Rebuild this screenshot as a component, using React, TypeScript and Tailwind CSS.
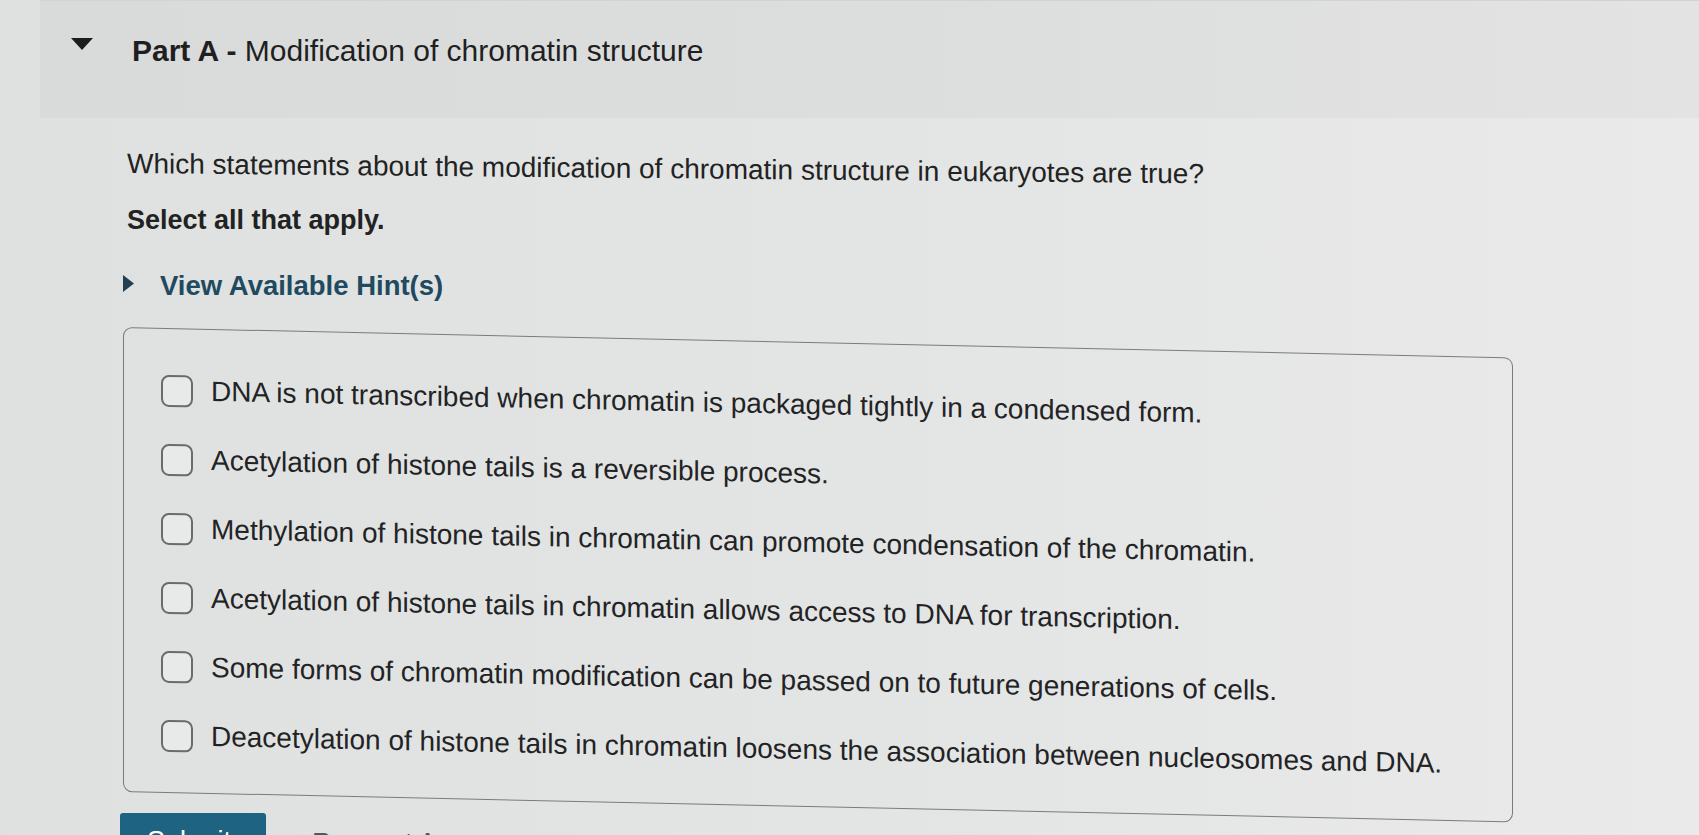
import React from "react";

const options = [
  "DNA is not transcribed when chromatin is packaged tightly in a condensed form.",
  "Acetylation of histone tails is a reversible process.",
  "Methylation of histone tails in chromatin can promote condensation of the chromatin.",
  "Acetylation of histone tails in chromatin allows access to DNA for transcription.",
  "Some forms of chromatin modification can be passed on to future generations of cells.",
  "Deacetylation of histone tails in chromatin loosens the association between nucleosomes and DNA.",
];

export default function App() {
  return (
    <div className="h-[835px] w-full overflow-hidden bg-gradient-to-r from-[#dfe1e0] via-[#e3e5e4] to-[#e9eae9] font-['Liberation_Sans',Arial,sans-serif] text-[#222222]">
      {/* Header band */}
      <div className="ml-[40px] flex h-[118px] items-start border-t border-t-[#d2d4d3] bg-gradient-to-r from-[#d9dbda] via-[#dcdedd] to-[#e2e3e2] pl-[31px] pt-[29px]">
        <svg width="22" height="12" viewBox="0 0 22 12" className="mt-[8px] shrink-0">
          <polygon points="0,0 22,0 11,12" fill="#1c1c1e" />
        </svg>
        <h2 className="ml-[39px] mt-[6px] whitespace-nowrap text-[30px] leading-[30px] text-[#1f1f22]">
          <span className="font-bold">Part A -</span> Modification of chromatin structure
        </h2>
      </div>

      {/* Body */}
      <div className="pl-[127px]">
        <p className="mt-[32px] origin-left skew-y-[0.55deg] whitespace-nowrap text-[28px] leading-[28px]">
          Which statements about the modification of chromatin structure in eukaryotes are true?
        </p>
        <p className="mt-[28px] whitespace-nowrap text-[27px] font-bold leading-[28px]">
          Select all that apply.
        </p>

        <div className="-ml-[4px] mt-[38px] flex items-center">
          <svg width="11" height="17" viewBox="0 0 11 17" className="-mt-[5px] shrink-0">
            <polygon points="0,0 11,8.5 0,17" fill="#233f52" />
          </svg>
          <span className="ml-[26px] whitespace-nowrap text-[27.5px] font-bold leading-[28px] text-[#1f4a60]">
            View Available Hint(s)
          </span>
        </div>

        {/* Options box */}
        <div className="-ml-[4px] mt-[27px] w-[1390px] origin-left skew-y-[1.25deg] rounded-[9px] border-[1.5px] border-[#7a7c7c] pb-[40px] pl-[37px] pt-[46px]">
          <div className="flex flex-col gap-[37px]">
            {options.map((o) => (
              <label key={o} className="flex h-[32px] items-center">
                <span className="h-[32px] w-[32px] shrink-0 rounded-[8px] border-[2.5px] border-[#6a6b6b] bg-[#e8eae9]" />
                <span className="ml-[18px] whitespace-nowrap text-[28px] leading-[28px] text-[#232325]">
                  {o}
                </span>
              </label>
            ))}
          </div>
        </div>

        {/* Buttons */}
        <div className="-ml-[7px] mt-[21px] flex items-start">
          <button className="flex h-[56px] w-[146px] items-start rounded-t-[3px] bg-[#1e6382] pl-[27px] pt-[14px] text-left text-[27px] leading-[28px] text-white">
            <span>Submit</span>
          </button>
          <span className="ml-[46px] pt-[16px] whitespace-nowrap text-[27px] leading-[28px] text-[#4d5a60]">
            Request Answer
          </span>
        </div>
      </div>
    </div>
  );
}
